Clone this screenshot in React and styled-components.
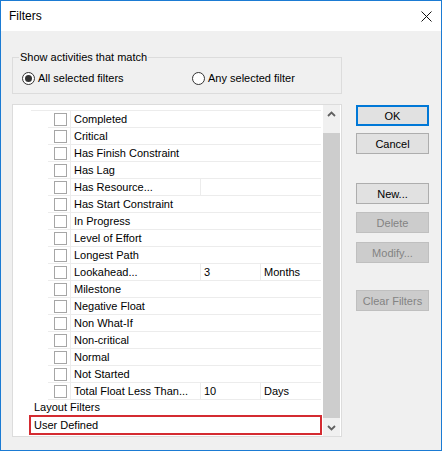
import React from "react"
import styled, { createGlobalStyle, css } from "styled-components"

const GlobalStyle = createGlobalStyle`
  html, body {
    margin: 0;
    padding: 0;
    background: #ffffff;
  }
  * {
    box-sizing: border-box;
  }
`

const uiFont = `"Liberation Sans", Arial, sans-serif`

const Window = styled.div`
  width: 442px;
  height: 451px;
  border: 1px solid #1b7bd3;
  display: flex;
  flex-direction: column;
  font-family: ${uiFont};
  font-size: 11px;
  color: #000;
  background: #f0f0f0;
`

const TitleBar = styled.div`
  height: 30px;
  flex: none;
  background: #fff;
  display: flex;
  align-items: center;
  justify-content: space-between;
  padding-left: 8px;
`

const Title = styled.div`
  font-size: 12px;
`

const CloseBox = styled.div`
  width: 30px;
  height: 30px;
  display: flex;
  align-items: center;
  justify-content: center;
`

const Body = styled.div`
  flex: 1;
  display: flex;
  padding: 0 11px;
`

const LeftColumn = styled.div`
  width: 330px;
  display: flex;
  flex-direction: column;
`

const GroupBox = styled.fieldset`
  margin: 19px 0 0 0;
  padding: 7px 0 6px 9px;
  border: 1px solid #dcdcdc;
  height: 44px;
`

const Legend = styled.legend`
  padding: 0 1px;
  margin-left: -3px;
  line-height: 14px;
`

const RadioRow = styled.div`
  display: flex;
  align-items: center;
  height: 14px;
`

const RadioLabel = styled.label`
  display: flex;
  align-items: center;
  gap: 3px;
  width: ${(p) => p.$width || "auto"};
`

const RadioCircle = styled.span`
  width: 13px;
  height: 13px;
  border-radius: 50%;
  border: 1px solid #333;
  background: #fff;
  display: flex;
  align-items: center;
  justify-content: center;
  &::after {
    content: "";
    width: 7px;
    height: 7px;
    border-radius: 50%;
    background: ${(p) => (p.$checked ? "#333" : "transparent")};
  }
`

const ListBox = styled.div`
  margin-top: 10px;
  height: 333px;
  border: 1px solid #dcdcdc;
  background: #fff;
  display: flex;
`

const Rows = styled.div`
  width: 310px;
  display: flex;
  flex-direction: column;
`

const TopStub = styled.div`
  height: 6px;
  margin-left: 18px;
  width: 290px;
  border-bottom: 1px solid #ececec;
`

const Row = styled.div`
  height: 17px;
  margin-left: 35px;
  width: 273px;
  display: flex;
  border-bottom: 1px solid #ececec;
  line-height: 16px;
`

const Cell = styled.div`
  height: 16px;
  width: ${(p) => p.$w}px;
  flex: none;
  padding-left: 3px;
  white-space: nowrap;
  overflow: hidden;
  ${(p) =>
    p.$sep &&
    css`
      border-right: 1px solid #ececec;
    `}
`

const CheckCell = styled.div`
  width: 23px;
  height: 16px;
  flex: none;
  border-right: 1px solid #ececec;
  display: flex;
  align-items: center;
  padding-left: 6px;
`

const CheckBox = styled.span`
  width: 13px;
  height: 13px;
  border: 1px solid #a6a6a6;
  background: #fff;
`

const GroupRow = styled.div`
  height: 15px;
  line-height: 15px;
  margin-left: 21px;
`

const SelectedRow = styled.div`
  height: 20px;
  line-height: 16px;
  margin-left: 16px;
  width: 293px;
  border: 2px solid #d42b31;
  padding-left: 3px;
`

const ScrollBar = styled.div`
  width: 17px;
  margin-left: 0;
  margin-right: 1px;
  background: #f0f0f0;
  display: flex;
  flex-direction: column;
`

const ArrowBox = styled.div`
  height: 17px;
  flex: none;
  display: flex;
  align-items: center;
  justify-content: center;
`

const Track = styled.div`
  flex: 1;
  display: flex;
  padding: 11px 0 1px;
`

const Thumb = styled.div`
  flex: 1;
  background: #cdcdcd;
`

const RightColumn = styled.div`
  width: 73px;
  margin-left: 14px;
  padding-top: 74px;
  display: flex;
  flex-direction: column;
`

const Button = styled.button`
  height: 21px;
  width: 73px;
  margin: ${(p) => p.$top || 0}px 0 0 0;
  padding: 0;
  font-family: ${uiFont};
  font-size: 11px;
  color: #000;
  background: #e1e1e1;
  border: 1px solid #adadad;
  ${(p) =>
    p.$default &&
    css`
      border: 2px solid #0078d7;
    `}
  &:disabled {
    background: #cccccc;
    border-color: #bfbfbf;
    color: #838383;
  }
`

const Chevron = ({ up }) => (
  <svg width="9" height="6" viewBox="0 0 9 6">
    <path
      d={up ? "M1 5 L4.5 1.5 L8 5" : "M1 1 L4.5 4.5 L8 1"}
      fill="none"
      stroke="#606060"
      strokeWidth="1.8"
    />
  </svg>
)

const filters = [
  { name: "Completed" },
  { name: "Critical" },
  { name: "Has Finish Constraint" },
  { name: "Has Lag" },
  { name: "Has Resource...", value: "" },
  { name: "Has Start Constraint" },
  { name: "In Progress" },
  { name: "Level of Effort" },
  { name: "Longest Path" },
  { name: "Lookahead...", value: "3", unit: "Months" },
  { name: "Milestone" },
  { name: "Negative Float" },
  { name: "Non What-If" },
  { name: "Non-critical" },
  { name: "Normal" },
  { name: "Not Started" },
  { name: "Total Float Less Than...", value: "10", unit: "Days" },
]

function FilterRow({ item }) {
  const hasValue = item.value !== undefined
  return (
    <Row>
      <CheckCell>
        <CheckBox />
      </CheckCell>
      <Cell $w={130} $sep={hasValue}>
        {item.name}
      </Cell>
      {hasValue && (
        <Cell $w={60} $sep={item.unit !== undefined}>
          {item.value}
        </Cell>
      )}
      {item.unit && <Cell $w={60}>{item.unit}</Cell>}
    </Row>
  )
}

export default function App() {
  return (
    <>
      <GlobalStyle />
      <Window>
        <TitleBar>
          <Title>Filters</Title>
          <CloseBox>
            <svg width="11" height="11" viewBox="0 0 11 11">
              <path d="M0.5 0.5 L10.5 10.5 M10.5 0.5 L0.5 10.5" stroke="#111" strokeWidth="1" />
            </svg>
          </CloseBox>
        </TitleBar>
        <Body>
          <LeftColumn>
            <GroupBox>
              <Legend>Show activities that match</Legend>
              <RadioRow>
                <RadioLabel $width="170px">
                  <RadioCircle $checked />
                  All selected filters
                </RadioLabel>
                <RadioLabel>
                  <RadioCircle />
                  Any selected filter
                </RadioLabel>
              </RadioRow>
            </GroupBox>
            <ListBox>
              <Rows>
                <TopStub />
                {filters.map((f) => (
                  <FilterRow key={f.name} item={f} />
                ))}
                <GroupRow>Layout Filters</GroupRow>
                <SelectedRow>User Defined</SelectedRow>
              </Rows>
              <ScrollBar>
                <ArrowBox>
                  <Chevron up />
                </ArrowBox>
                <Track>
                  <Thumb />
                </Track>
                <ArrowBox>
                  <Chevron />
                </ArrowBox>
              </ScrollBar>
            </ListBox>
          </LeftColumn>
          <RightColumn>
            <Button $default>OK</Button>
            <Button $top={7}>Cancel</Button>
            <Button $top={29}>New...</Button>
            <Button $top={8} disabled>
              Delete
            </Button>
            <Button $top={9} disabled>
              Modify...
            </Button>
            <Button $top={27} disabled>
              Clear Filters
            </Button>
          </RightColumn>
        </Body>
      </Window>
    </>
  )
}
